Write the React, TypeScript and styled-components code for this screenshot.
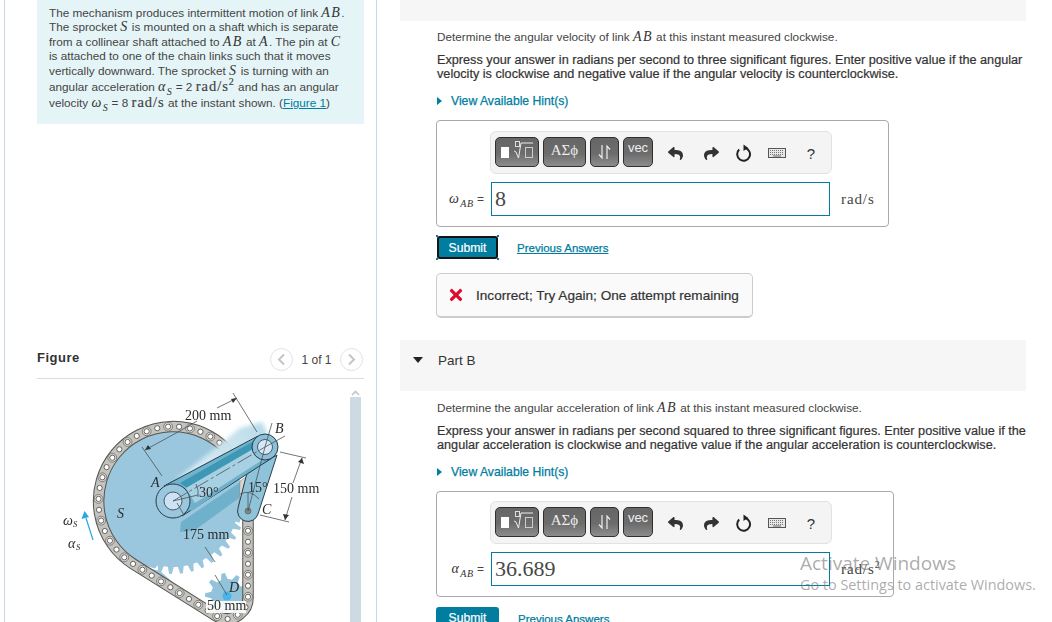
import React from "react";
import styled, { createGlobalStyle, css } from "styled-components";
import { FaReply, FaShare, FaTimes } from "react-icons/fa";

const GlobalStyle = createGlobalStyle`
  html, body {
    margin: 0;
    height: 622px;
    overflow: hidden;
    background: #fff;
    font-family: "Liberation Sans", Arial, sans-serif;
    color: #333;
  }
`;

const TEAL = "#007d9f";

const Page = styled.div`
  display: flex;
  align-items: flex-start;
  height: 622px;
  overflow: hidden;
`;

/* ------------------ Left column ------------------ */
const LeftColumn = styled.div`
  box-sizing: border-box;
  width: 373px;
  height: 622px;
  margin-left: 4px;
  padding: 0 12px 0 32px;
  border-left: 1px solid #c9d6e3;
  border-right: 1px solid #c9d6e3;
  flex: none;
`;

const Problem = styled.div`
  box-sizing: border-box;
  height: 124px;
  padding: 6px 12px 0;
  background: #e5f5f7;
  font-size: 11.75px;
  color: #444;
`;

const ProblemLine = styled.div<{ $tall?: boolean }>`
  height: ${(p) => (p.$tall ? "16px" : "14.4px")};
  line-height: ${(p) => (p.$tall ? "17px" : "14.4px")};
  white-space: nowrap;
`;

const Mi = styled.span`
  font-family: "Liberation Serif", serif;
  font-style: italic;
  font-size: 14px;
  line-height: 0;
  letter-spacing: 1.4px;
  color: #333;
`;

const Mr = styled.span`
  font-family: "Liberation Serif", serif;
  font-size: 14.5px;
  line-height: 0;
  letter-spacing: 1px;
  -webkit-text-stroke: 0.2px #444;
`;

const Sub = styled.sub`
  font-family: "Liberation Serif", serif;
  font-style: italic;
  font-size: 10px;
  line-height: 0;
  letter-spacing: 0.6px;
`;

const Sup = styled.sup`
  font-family: "Liberation Serif", serif;
  font-size: 10px;
  line-height: 0;
`;

const FigureLink = styled.a`
  color: ${TEAL};
  text-decoration: underline;
`;

const FigureHeader = styled.div`
  display: flex;
  align-items: center;
  box-sizing: border-box;
  height: 34px;
  margin-top: 221px;
  padding-right: 1px;
  border-bottom: 1px solid #dcdcdc;
`;

const FigureTitle = styled.div`
  flex: 1;
  margin-top: -9px;
  font-size: 13px;
  font-weight: bold;
  letter-spacing: 0.5px;
  color: #333;
`;

const PagerButton = styled.div`
  box-sizing: border-box;
  display: flex;
  align-items: center;
  justify-content: center;
  width: 23px;
  height: 23px;
  margin-top: -4px;
  border: 1px solid #e2e2e2;
  border-radius: 50%;
  background: #fff;
`;

const PagerText = styled.div`
  width: 47px;
  margin-top: -4px;
  text-align: center;
  font-size: 12px;
  color: #444;
`;

const FigureBody = styled.div`
  display: flex;
`;

const Drawing = styled.svg`
  display: block;
  flex: none;
  filter: blur(0.35px);
`;

const ScrollBar = styled.div`
  display: flex;
  flex-direction: column;
  align-items: center;
  width: 11px;
`;

const ScrollArrow = styled.div`
  height: 15px;
  margin-top: 3px;
`;

const ScrollThumb = styled.div`
  width: 11px;
  height: 225px;
  background: #cddae4;
`;

/* ------------------ Right column ------------------ */
const RightColumn = styled.div`
  width: 626px;
  margin-left: 23px;
  flex: none;
`;

const PartBar = styled.div<{ $height: number }>`
  display: flex;
  align-items: flex-start;
  gap: 15px;
  box-sizing: border-box;
  height: ${(p) => p.$height}px;
  padding: 13px 0 0 13px;
  background: #f6f6f6;
  font-size: 13.5px;
  color: #333;
`;

const PartCaret = styled.div`
  width: 0;
  height: 0;
  margin-top: 4px;
  border-left: 5px solid transparent;
  border-right: 5px solid transparent;
  border-top: 6px solid #222;
`;

const Section = styled.div`
  padding-left: 36px;
`;

const Prompt = styled.div<{ $top: number }>`
  margin: ${(p) => p.$top}px 0 0 1px;
  font-size: 11.75px;
  line-height: 14px;
  white-space: nowrap;
  color: #444;
`;

const Instructions = styled.div<{ $top: number }>`
  margin: ${(p) => p.$top}px 0 0 1px;
  font-size: 12.68px;
  line-height: 14px;
  white-space: nowrap;
  color: #333;
  -webkit-text-stroke: 0.2px #333;
`;

const Hint = styled.div`
  display: flex;
  align-items: center;
  gap: 9px;
  margin: 13px 0 0 1px;
  font-size: 12.2px;
  line-height: 14px;
  color: ${TEAL};
  -webkit-text-stroke: 0.25px ${TEAL};
`;

const HintCaret = styled.div`
  width: 0;
  height: 0;
  border-top: 4px solid transparent;
  border-bottom: 4px solid transparent;
  border-left: 5px solid ${TEAL};
`;

const AnswerBox = styled.div<{ $width: number; $top: number; $tight?: boolean }>`
  box-sizing: border-box;
  width: ${(p) => p.$width}px;
  margin-top: ${(p) => p.$top}px;
  padding: ${(p) => (p.$tight ? "9px" : "10px")} 0 10px;
  border: 1px solid #aaa;
  border-radius: 4px;
`;

const Toolbar = styled.div`
  box-sizing: border-box;
  display: flex;
  align-items: flex-start;
  width: 342px;
  height: 43px;
  margin-left: 53px;
  padding: 5px 0 0 4px;
  border: 1px solid #e2e2e2;
  border-radius: 6px;
  background: #f4f4f4;
`;

const ToolButton = styled.div<{ $width: number; $top?: boolean }>`
  box-sizing: border-box;
  display: flex;
  justify-content: center;
  align-items: ${(p) => (p.$top ? "flex-start" : "center")};
  width: ${(p) => p.$width}px;
  height: 30px;
  margin-right: 4px;
  border: 1px solid #2f2f2f;
  border-radius: 5px;
  background: linear-gradient(#666 0%, #6c6c6c 55%, #8c8c8c 100%);
  color: #eee;
`;

const GreekLabel = styled.span`
  font-family: "Liberation Serif", serif;
  font-size: 15px;
  margin-top: -4px;
`;

const VecLabel = styled.span`
  font-size: 13px;
  line-height: 19px;
`;

const ToolIcon = styled.div<{ $width: number }>`
  display: flex;
  align-items: center;
  justify-content: center;
  width: ${(p) => p.$width}px;
  height: 30px;
  margin-top: 1px;
  color: #333;
  font-size: 15px;
`;

const InputRow = styled.div`
  display: flex;
  align-items: center;
  margin-top: 8px;
`;

const InputLabel = styled.div`
  box-sizing: border-box;
  width: 54px;
  padding-right: 7px;
  text-align: right;
  font-size: 12px;
  white-space: nowrap;
  color: #444;
`;

const AnswerInput = styled.input`
  box-sizing: border-box;
  width: 339px;
  height: 34px;
  padding: 0 3px;
  border: 1px solid ${TEAL};
  outline: none;
  background: transparent;
  font-family: "Liberation Serif", serif;
  font-size: 22px;
  color: #484848;
`;

const Unit = styled.div`
  margin-left: 11px;
  font-family: "Liberation Serif", serif;
  font-size: 15px;
  line-height: 15px;
  letter-spacing: 0.9px;
  color: #444;
`;

const focusCorners = css`
  &::after {
    content: "";
    position: absolute;
    inset: -3px;
    background:
      linear-gradient(${TEAL}, ${TEAL}) left top / 2px 2px no-repeat,
      linear-gradient(${TEAL}, ${TEAL}) right top / 2px 2px no-repeat,
      linear-gradient(${TEAL}, ${TEAL}) left bottom / 2px 2px no-repeat,
      linear-gradient(${TEAL}, ${TEAL}) right bottom / 2px 2px no-repeat;
  }
`;

const SubmitRow = styled.div<{ $top: number }>`
  display: flex;
  align-items: center;
  gap: 19px;
  margin-top: ${(p) => p.$top}px;
`;

const SubmitButton = styled.div<{ $focused?: boolean }>`
  position: relative;
  box-sizing: border-box;
  width: ${(p) => (p.$focused ? "61px" : "63px")};
  height: ${(p) => (p.$focused ? "23px" : "24px")};
  margin-left: ${(p) => (p.$focused ? "1px" : "0")};
  border: ${(p) => (p.$focused ? "2px solid #141414" : "none")};
  border-radius: 3px;
  background: ${TEAL};
  color: #fff;
  font-size: 12.2px;
  line-height: ${(p) => (p.$focused ? "20px" : "22px")};
  text-align: center;
  -webkit-text-stroke: 0.2px #fff;
  ${(p) => p.$focused && focusCorners}
`;

const PreviousLink = styled.a`
  font-size: 11.5px;
  color: ${TEAL};
  text-decoration: underline;
  -webkit-text-stroke: 0.25px ${TEAL};
`;

const Feedback = styled.div`
  box-sizing: border-box;
  display: flex;
  align-items: center;
  gap: 11px;
  width: 317px;
  height: 45px;
  margin-top: 14px;
  padding-left: 10px;
  border: 1px solid #ccc;
  border-bottom-width: 2px;
  border-radius: 5px;
  background: #fafafa;
  font-size: 13.6px;
  color: #333;
  -webkit-text-stroke: 0.2px #333;
`;

const FeedbackIcon = styled.span`
  display: flex;
  color: #dc0a2d;
  font-size: 18px;
`;

const PartSpacer = styled.div`
  height: 22px;
`;

const Watermark = styled.div`
  position: absolute;
  left: 800px;
  top: 551px;
  font-family: "Open Sans", sans-serif;
  color: rgba(115, 115, 115, 0.6);
  pointer-events: none;
  white-space: nowrap;
`;

const WatermarkTitle = styled.div`
  font-size: 19px;
  line-height: 24px;
`;

const WatermarkText = styled.div`
  font-size: 14.4px;
  line-height: 20px;
`;

/* ------------------ Toolbar drawings ------------------ */
const TemplateIcon = () => (
  <svg width="42" height="28" viewBox="0 0 42 28">
    <rect x="5" y="9" width="8" height="11" fill="#fff" />
    <rect x="19.5" y="3.5" width="4" height="5" fill="none" stroke="#ddd" />
    <path d="M18 13 L20 14 L22.5 20 L25 5 H37" fill="none" stroke="#eee" />
    <rect x="29.5" y="9.5" width="7" height="10" fill="none" stroke="#ccc" />
  </svg>
);

const ArrowsIcon = () => (
  <svg width="15" height="16" viewBox="0 0 15 16">
    <path d="M5 1 V14 L2 10.5 M10 15 V2 L13 5.5" fill="none" stroke="#eee" strokeWidth="1.2" />
  </svg>
);

const ResetIcon = () => (
  <svg width="17" height="18" viewBox="0 0 17 18">
    <path d="M10 4 A6.4 6.4 0 1 1 4.2 5.6" fill="none" stroke="#222" strokeWidth="2" />
    <path d="M8.5 0.5 L13 3.8 L8.5 7 Z" fill="#222" />
  </svg>
);

const KeyboardIcon = () => (
  <svg width="18" height="10" viewBox="0 0 18 10">
    <rect x="0.5" y="0.5" width="17" height="9" fill="#e8e8e8" stroke="#555" />
    <path d="M2 2.5 h14 M2 4.5 h14 M2 6.5 h14" stroke="#777" strokeDasharray="1 1" />
    <path d="M5 8 h8" stroke="#666" />
  </svg>
);

const Chevron = ({ flip }: { flip?: boolean }) => (
  <svg width="9" height="13" viewBox="0 0 9 13">
    <path d={flip ? "M2 1.5 L7 6.5 L2 11.5" : "M7 1.5 L2 6.5 L7 11.5"} fill="none" stroke="#c4c4c4" strokeWidth="2" />
  </svg>
);

const MathToolbar = () => (
  <Toolbar>
    <ToolButton $width={44}><TemplateIcon /></ToolButton>
    <ToolButton $width={43}><GreekLabel>ΑΣϕ</GreekLabel></ToolButton>
    <ToolButton $width={29}><ArrowsIcon /></ToolButton>
    <ToolButton $width={30} $top><VecLabel>vec</VecLabel></ToolButton>
    <ToolIcon $width={36}><FaReply /></ToolIcon>
    <ToolIcon $width={36}><FaShare /></ToolIcon>
    <ToolIcon $width={28}><ResetIcon /></ToolIcon>
    <ToolIcon $width={40}><KeyboardIcon /></ToolIcon>
    <ToolIcon $width={28}>?</ToolIcon>
  </Toolbar>
);

/* ------------------ Figure ------------------ */
type Pt = [number, number];

const polar = (cx: number, cy: number, r: number, deg: number): Pt => [
  cx + r * Math.cos((deg * Math.PI) / 180),
  cy + r * Math.sin((deg * Math.PI) / 180),
];

const toothRun = (cx: number, cy: number, root: number, tip: number, from: number, to: number, teeth: number) => {
  const pts: Pt[] = [];
  const pitch = (to - from) / teeth;
  for (let i = 0; i < teeth; i++) {
    const a = from + i * pitch;
    pts.push(polar(cx, cy, root, a));
    pts.push(polar(cx, cy, root, a + pitch * 0.2));
    pts.push(polar(cx, cy, tip, a + pitch * 0.38));
    pts.push(polar(cx, cy, tip, a + pitch * 0.62));
    pts.push(polar(cx, cy, root, a + pitch * 0.8));
  }
  return pts;
};

const toPoints = (pts: Pt[]) => pts.map((p) => p.join(",")).join(" ");

const A: Pt = [173, 501];

const discPoints = () => {
  const pts = toothRun(A[0], A[1], 66, 73, 18, 105, 10);
  for (let d = 105; d <= 378; d += 3) pts.push(polar(A[0], A[1], 70, d));
  return toPoints(pts);
};

const chainPolyline = () => {
  const pts: Pt[] = [];
  for (let d = -43; d >= -238; d -= 2) pts.push(polar(A[0], A[1], 74.5, d));
  pts.push([213, 614]);
  pts.push([221, 618], [228, 619], [236, 616], [243, 611], [247, 605], [248, 598]);
  pts.push([248, 520]);
  return pts;
};

const sampleAlong = (pts: Pt[], spacing: number) => {
  const out: Pt[] = [];
  let left = 0;
  for (let i = 1; i < pts.length; i++) {
    const [x0, y0] = pts[i - 1];
    const [x1, y1] = pts[i];
    const len = Math.hypot(x1 - x0, y1 - y0);
    let t = left;
    while (t < len) {
      out.push([x0 + ((x1 - x0) * t) / len, y0 + ((y1 - y0) * t) / len]);
      t += spacing;
    }
    left = t - len;
  }
  return out;
};

const CHAIN_PATH = "M227.5 450.2 A74.5 74.5 0 1 0 133.5 564.2 L213 614 Q228 624 240 614 Q248 608 248 598 L248 520";

const Dim = styled.g`
  fill: none;
  stroke: #4a5358;
  stroke-width: 0.8;
`;

const Label = styled.text<{ $italic?: boolean }>`
  font-family: "Liberation Serif", serif;
  font-size: 14px;
  font-style: ${(p) => (p.$italic ? "italic" : "normal")};
  fill: #2b2b2b;
`;

const SmallLabel = styled(Label)`
  font-size: 8.5px;
`;

const Mechanism = () => (
  <Drawing width="313" height="243" viewBox="37 379 313 243">
    <defs>
      <linearGradient id="glow" x1="0" y1="1" x2="1" y2="0">
        <stop offset="0" stopColor="#e8f3f8" stopOpacity="0.9" />
        <stop offset="1" stopColor="#b5d9e9" />
      </linearGradient>
      <filter id="soft" x="-20%" y="-20%" width="140%" height="140%">
        <feGaussianBlur stdDeviation="2" />
      </filter>
    </defs>

    <polygon points={discPoints()} fill="#9ac7dd" />
    <polygon points="133,564 160,571 176,585 170,590" fill="#9ac7dd" />
    <polygon points={toPoints(toothRun(227, 595, 16, 22, 0, 360, 9))} fill="#92c3da" />
    <circle cx="227" cy="596" r="4.5" fill="#4ab4e6" />

    <path d={CHAIN_PATH} fill="none" stroke="#55544f" strokeWidth="11.5" />
    <path d={CHAIN_PATH} fill="none" stroke="#c4c3be" strokeWidth="9.5" />
    {sampleAlong(chainPolyline(), 11).map((p, i) => (
      <g key={i}>
        {i % 2 === 0 && <circle cx={p[0]} cy={p[1]} r="4.4" fill="#dddcd7" stroke="#5d5c58" strokeWidth="0.7" />}
        <circle cx={p[0]} cy={p[1]} r="2.6" fill="#fff" stroke="#444" strokeWidth="0.8" />
      </g>
    ))}

    <polygon points="176,480 240,428 262,422 268,434 190,482" fill="url(#glow)" filter="url(#soft)" />
    <polygon points="181,522 276,458 250,490 195,530 180,532" fill="#6fb0cb" />

    <polygon points="240,481 246,477 239,506" fill="#d9d8d0" stroke="#777" strokeWidth="0.5" />
    <path d="M277 455 L258 514 A10 10 0 1 1 238 508 L247 473 Z" fill="#8fc3da" stroke="#2c3e48" strokeWidth="1" />
    <circle cx="248" cy="511" r="3" fill="#85857f" stroke="#444" strokeWidth="0.5" />

    <polygon points="164,486 258,436 272,458 182,516" fill="#6fb3cd" stroke="#263d4a" strokeWidth="1" />
    <polygon points="180,483 252,442 257,446 258,450 190,490" fill="#3f97b6" />
    <polygon points="186,488 253,449 264,459 196,505" fill="#a7d1e3" />
    <polygon points="192,505 264,459 268,458 190,512" fill="#6fb0cb" />

    <circle cx="173" cy="501" r="17" fill="#9ac7dd" stroke="#263d4a" strokeWidth="1" />
    <circle cx="173" cy="501" r="9" fill="#cde2f4" stroke="#3c4e58" strokeWidth="0.9" />
    <circle cx="265" cy="447" r="13" fill="#8cc0d8" stroke="#263d4a" strokeWidth="1" />
    <circle cx="265" cy="447" r="7.5" fill="#d6e8f7" stroke="#3c4e58" strokeWidth="0.9" />

    <Dim>
      <path d="M173 501 L265 447" strokeDasharray="16 3 3 3" />
      <path d="M145 450 L178 432 L197 421" />
      <path d="M142 447 L162 476" />
      <path d="M217 408 L237 398" />
      <path d="M233 393 L257 432" />
      <path d="M280 452 L306 458" />
      <path d="M260 515 L289 522" />
      <path d="M302 458 L293 483" />
      <path d="M292 497 L285 520" />
      <path d="M177 503 L184 515" />
      <path d="M205 547 L215 562" />
      <path d="M215 575 L227 595" />
      <path d="M265 447 L248 511" />
      <path d="M248 511 L248 492" />
      <path d="M265 447 L272 423" />
      <path d="M265 447 L285 436" />
      <path d="M240 494 Q250 489 259 499" />
      <path d="M196 484 Q199 490 198 497" />
      <path d="M173 501 L198 495" />
    </Dim>
    <polygon points="145,450 151,449 148,445" fill="#333" />
    <polygon points="237,398 231,399 233,403" fill="#333" />
    <polygon points="302,458 298,462 304,464" fill="#333" />
    <polygon points="285,520 283,514 289,515" fill="#333" />
    <path d="M93 540 L86 518" fill="none" stroke="#2aa6e0" strokeWidth="1.2" />
    <polygon points="84.5,511 81.5,519 89,517" fill="#2aa6e0" />

    <rect x="206" y="601" width="40" height="12" fill="#fff" fillOpacity="0.88" />

    <Label x="185" y="420">200 mm</Label>
    <Label x="275" y="433" $italic>B</Label>
    <Label x="151" y="487" $italic>A</Label>
    <Label x="117" y="518" $italic>S</Label>
    <Label x="199" y="497">30°</Label>
    <Label x="248" y="492">15°</Label>
    <Label x="273" y="493">150 mm</Label>
    <Label x="183" y="539">175 mm</Label>
    <Label x="207" y="610">50 mm</Label>
    <Label x="262" y="514" $italic>C</Label>
    <Label x="229" y="592" $italic>D</Label>
    <Label x="63" y="525" $italic>ω</Label>
    <SmallLabel x="73" y="527" $italic>S</SmallLabel>
    <Label x="68" y="548" $italic>α</Label>
    <SmallLabel x="76" y="550" $italic>S</SmallLabel>
  </Drawing>
);

/* ------------------ Page ------------------ */
const App = () => {
  return (
    <Page>
      <GlobalStyle />
      <LeftColumn>
        <Problem>
          <ProblemLine>The mechanism produces intermittent motion of link <Mi>AB</Mi>.</ProblemLine>
          <ProblemLine>The sprocket <Mi>S</Mi> is mounted on a shaft which is separate</ProblemLine>
          <ProblemLine>from a collinear shaft attached to <Mi>AB</Mi> at <Mi>A</Mi>. The pin at <Mi>C</Mi></ProblemLine>
          <ProblemLine>is attached to one of the chain links such that it moves</ProblemLine>
          <ProblemLine>vertically downward. The sprocket <Mi>S</Mi> is turning with an</ProblemLine>
          <ProblemLine $tall>angular acceleration <Mi>α<Sub>S</Sub></Mi> = 2 <Mr>rad/s<Sup>2</Sup></Mr> and has an angular</ProblemLine>
          <ProblemLine $tall>velocity <Mi>ω<Sub>S</Sub></Mi> = 8 <Mr>rad/s</Mr> at the instant shown. (<FigureLink>Figure 1</FigureLink>)</ProblemLine>
        </Problem>
        <FigureHeader>
          <FigureTitle>Figure</FigureTitle>
          <PagerButton><Chevron /></PagerButton>
          <PagerText>1 of 1</PagerText>
          <PagerButton><Chevron flip /></PagerButton>
        </FigureHeader>
        <FigureBody>
          <Mechanism />
          <ScrollBar>
            <ScrollArrow>
              <svg width="9" height="6" viewBox="0 0 9 6">
                <path d="M1 5 L4.5 1.5 L8 5" fill="none" stroke="#c4c4c4" strokeWidth="1.6" />
              </svg>
            </ScrollArrow>
            <ScrollThumb />
          </ScrollBar>
        </FigureBody>
      </LeftColumn>

      <RightColumn>
        <PartBar $height={21} />
        <Section>
          <Prompt $top={9}>Determine the angular velocity of link <Mi>AB</Mi> at this instant measured clockwise.</Prompt>
          <Instructions $top={9}>
            Express your answer in radians per second to three significant figures. Enter positive value if the angular
            <br />
            velocity is clockwise and negative value if the angular velocity is counterclockwise.
          </Instructions>
          <Hint><HintCaret />View Available Hint(s)</Hint>
          <AnswerBox $width={453} $top={12}>
            <MathToolbar />
            <InputRow>
              <InputLabel><Mi>ω<Sub>AB</Sub></Mi> =</InputLabel>
              <AnswerInput readOnly value="8" />
              <Unit>rad/s</Unit>
            </InputRow>
          </AnswerBox>
          <SubmitRow $top={9}>
            <SubmitButton $focused>Submit</SubmitButton>
            <PreviousLink>Previous Answers</PreviousLink>
          </SubmitRow>
          <Feedback>
            <FeedbackIcon><FaTimes /></FeedbackIcon>
            Incorrect; Try Again; One attempt remaining
          </Feedback>
        </Section>
        <PartSpacer />
        <PartBar $height={51}>
          <PartCaret />
          Part B
        </PartBar>
        <Section>
          <Prompt $top={10}>Determine the angular acceleration of link <Mi>AB</Mi> at this instant measured clockwise.</Prompt>
          <Instructions $top={9}>
            Express your answer in radians per second squared to three significant figures. Enter positive value if the
            <br />
            angular acceleration is clockwise and negative value if the angular acceleration is counterclockwise.
          </Instructions>
          <Hint><HintCaret />View Available Hint(s)</Hint>
          <AnswerBox $width={458} $top={12} $tight>
            <MathToolbar />
            <InputRow>
              <InputLabel><Mi>α<Sub>AB</Sub></Mi> =</InputLabel>
              <AnswerInput readOnly value="36.689" />
              <Unit>rad/s<Sup>2</Sup></Unit>
            </InputRow>
          </AnswerBox>
          <SubmitRow $top={10}>
            <SubmitButton>Submit</SubmitButton>
            <PreviousLink>Previous Answers</PreviousLink>
          </SubmitRow>
        </Section>
      </RightColumn>

      <Watermark>
        <WatermarkTitle>Activate Windows</WatermarkTitle>
        <WatermarkText>Go to Settings to activate Windows.</WatermarkText>
      </Watermark>
    </Page>
  );
};

export default App;
